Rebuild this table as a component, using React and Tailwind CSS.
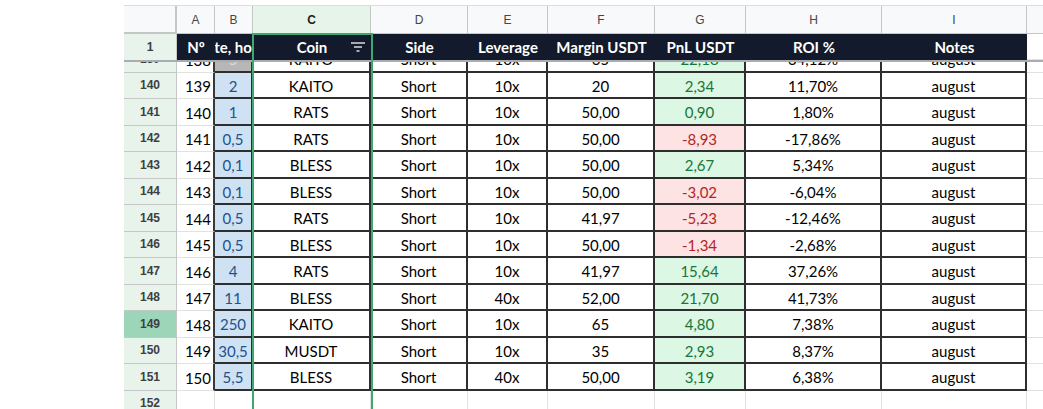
import React from "react";

const COLS = [
  { key: "A", w: "w-[38px]" },
  { key: "B", w: "w-[38px]" },
  { key: "C", w: "w-[118px]" },
  { key: "D", w: "w-[97px]" },
  { key: "E", w: "w-[80px]" },
  { key: "F", w: "w-[107px]" },
  { key: "G", w: "w-[91px]" },
  { key: "H", w: "w-[136px]" },
  { key: "I", w: "w-[145px]" },
];

const HEAD = ["Nº", "Date, hours", "Coin", "Side", "Leverage", "Margin USDT", "PnL USDT", "ROI %", "Notes"];

// строки 139..151, 139 почти скрыта под закреплённой строкой
const ROWS = [
  { n: 139, a: "138", b: "5", c: "KAITO", e: "10x", f: "65", g: "22,18", h: "34,12%", closed: true },
  { n: 140, a: "139", b: "2", c: "KAITO", e: "10x", f: "20", g: "2,34", h: "11,70%" },
  { n: 141, a: "140", b: "1", c: "RATS", e: "10x", f: "50,00", g: "0,90", h: "1,80%" },
  { n: 142, a: "141", b: "0,5", c: "RATS", e: "10x", f: "50,00", g: "-8,93", h: "-17,86%" },
  { n: 143, a: "142", b: "0,1", c: "BLESS", e: "10x", f: "50,00", g: "2,67", h: "5,34%" },
  { n: 144, a: "143", b: "0,1", c: "BLESS", e: "10x", f: "50,00", g: "-3,02", h: "-6,04%" },
  { n: 145, a: "144", b: "0,5", c: "RATS", e: "10x", f: "41,97", g: "-5,23", h: "-12,46%" },
  { n: 146, a: "145", b: "0,5", c: "BLESS", e: "10x", f: "50,00", g: "-1,34", h: "-2,68%" },
  { n: 147, a: "146", b: "4", c: "RATS", e: "10x", f: "41,97", g: "15,64", h: "37,26%" },
  { n: 148, a: "147", b: "11", c: "BLESS", e: "40x", f: "52,00", g: "21,70", h: "41,73%" },
  { n: 149, a: "148", b: "250", c: "KAITO", e: "10x", f: "65", g: "4,80", h: "7,38%", active: true },
  { n: 150, a: "149", b: "30,5", c: "MUSDT", e: "10x", f: "35", g: "2,93", h: "8,37%" },
  { n: 151, a: "150", b: "5,5", c: "BLESS", e: "40x", f: "50,00", g: "3,19", h: "6,38%" },
];

const cell = "flex items-center justify-center pt-[2px] border-b-2 border-r-2 border-[#2e2e2e]";
const rowHead =
  "w-[53px] shrink-0 flex items-center justify-center border-b border-r border-[#c4c7c5] text-[12px] font-bold text-[#3c4043] [font-family:'Liberation_Sans',Arial,sans-serif]";

function FilterIcon() {
  return (
    <svg width="16" height="12" viewBox="0 0 16 12" className="absolute right-[5px] top-[7px]">
      <path d="M1 2h14M4 6h8M6.5 10h3" stroke="#d7dbe0" strokeWidth="1.4" />
    </svg>
  );
}

function DataRow({ r }) {
  const neg = r.g.startsWith("-");
  return (
    <div className="flex h-[26.5px] shrink-0">
      <div className={`${rowHead} ${r.active ? "bg-[#9dd5b8]" : "bg-[#e7f3eb]"}`}>{r.n}</div>
      <div className="w-[38px] shrink-0 flex items-center justify-end pr-[2px] pt-[2px] border-b border-b-[#e1e3e1] border-r-2 border-r-[#3a3a3a]">
        {r.a}
      </div>
      <div
        className={`w-[38px] shrink-0 ${cell} ${
          r.closed ? "bg-[#b7b7b7] text-[#dcdcdc]" : "bg-[#cfe2f3] text-[#24508c]"
        }`}
      >
        {r.b}
      </div>
      <div className={`w-[118px] shrink-0 ${cell}`}>{r.c}</div>
      <div className={`w-[97px] shrink-0 ${cell}`}>Short</div>
      <div className={`w-[80px] shrink-0 ${cell}`}>{r.e}</div>
      <div className={`w-[107px] shrink-0 ${cell}`}>{r.f}</div>
      <div
        className={`w-[91px] shrink-0 ${cell} ${
          neg ? "bg-[#fde3e3] text-[#b3261e]" : "bg-[#dcf7e4] text-[#19753a]"
        }`}
      >
        {r.g}
      </div>
      <div className={`w-[136px] shrink-0 ${cell}`}>{r.h}</div>
      <div className={`w-[145px] shrink-0 ${cell}`}>august</div>
      <div className="flex-1 border-b border-[#e1e3e1]" />
    </div>
  );
}

function EmptyRow({ n }) {
  return (
    <div className="flex h-[26.5px] shrink-0">
      <div className={`${rowHead} bg-[#e7f3eb]`}>{n}</div>
      {COLS.map((c) => (
        <div key={c.key} className={`${c.w} shrink-0 border-b border-r border-[#e1e3e1]`} />
      ))}
      <div className="flex-1 border-b border-[#e1e3e1]" />
    </div>
  );
}

export default function App() {
  return (
    <div className="flex h-[409px] w-[1043px] overflow-hidden bg-white text-[15px] text-black [font-family:Lato,'Liberation_Sans',sans-serif]">
      <div className="w-[124px] shrink-0" />
      <div className="relative flex flex-1 flex-col min-w-0">
        <div className="h-[6px] shrink-0 border-b border-[#dadce0]" />

        {/* буквы столбцов */}
        <div className="flex h-[28px] shrink-0 text-[12px] text-[#444746] [font-family:'Liberation_Sans',Arial,sans-serif]">
          <div className="w-[53px] shrink-0 border-b-2 border-r-2 border-[#c4c7c5] bg-[#f8f9fa]" />
          {COLS.map((c) => (
            <div
              key={c.key}
              className={`${c.w} shrink-0 flex items-center justify-center border-b border-r border-[#c4c7c5] ${
                c.key === "C" ? "bg-[#e6f4ea] font-bold text-[#202124]" : "bg-[#f8f9fa]"
              }`}
            >
              {c.key}
            </div>
          ))}
          <div className="flex-1 border-b border-[#c4c7c5] bg-[#f8f9fa]" />
        </div>

        {/* закреплённая строка 1 */}
        <div className="flex h-[26px] shrink-0">
          <div className="w-[53px] shrink-0 flex items-center justify-center border-r border-[#c4c7c5] bg-[#e7f3eb] text-[12px] font-bold text-[#3c4043] [font-family:'Liberation_Sans',Arial,sans-serif]">
            1
          </div>
          {COLS.map((c, i) => (
            <div
              key={c.key}
              className={`${c.w} shrink-0 relative flex items-center justify-center overflow-hidden whitespace-nowrap bg-[#121a2b] font-bold text-white`}
            >
              {HEAD[i]}
              {c.key === "C" && <FilterIcon />}
            </div>
          ))}
          <div className="flex-1 border-b border-[#e1e3e1]" />
        </div>
        <div className="h-[2px] shrink-0 bg-[#a9acb1]" />

        <div className="flex-1 overflow-hidden">
          <div className="-mt-[16px] flex flex-col">
            {ROWS.map((r) => (
              <DataRow key={r.n} r={r} />
            ))}
            <EmptyRow n={152} />
            <EmptyRow n={153} />
          </div>
        </div>

        {/* выделение столбца C */}
        <div className="pointer-events-none absolute left-[128px] top-[33px] bottom-0 w-[121px] border-2 border-b-0 border-[#3ea86e]" />
      </div>
    </div>
  );
}
